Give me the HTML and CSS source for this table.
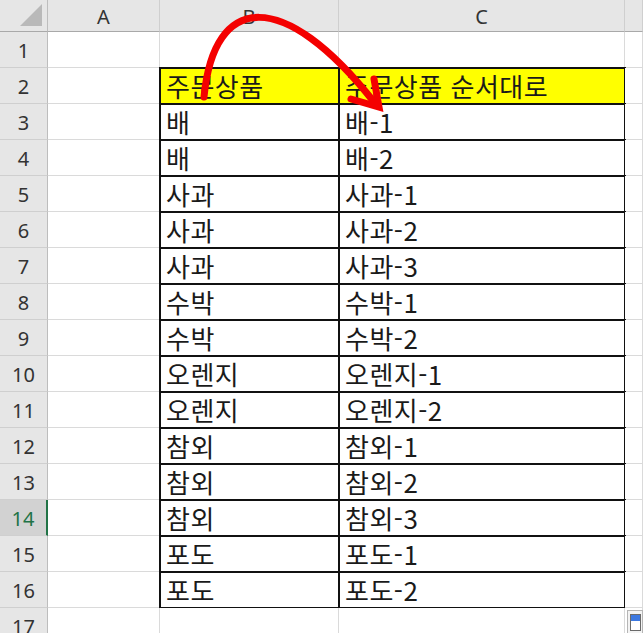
FILE: index.html
```html
<!DOCTYPE html>
<html lang="ko">
<head>
<meta charset="utf-8">
<link rel="stylesheet" href="styles.css">
</head>
<body>
<div class="sheet">
  <div class="row head">
    <div class="corner"><svg class="tri" width="22" height="22" viewBox="0 0 22 22"><polygon points="22,0 22,22 0,22" fill="#b9b9b9"/></svg></div>
    <div class="col">A</div>
    <div class="col">B</div>
    <div class="col">C</div>
    <div class="col"></div>
  </div>
  <div class="row"><div class="rh">1</div><div class="c"></div><div class="c"></div><div class="c"></div><div class="c"></div></div>
  <div class="row"><div class="rh">2</div><div class="c"></div><div class="c t y">주문상품</div><div class="c t y">주문상품 순서대로</div><div class="c"></div></div>
  <div class="row"><div class="rh">3</div><div class="c"></div><div class="c t">배</div><div class="c t">배-1</div><div class="c"></div></div>
  <div class="row"><div class="rh">4</div><div class="c"></div><div class="c t">배</div><div class="c t">배-2</div><div class="c"></div></div>
  <div class="row"><div class="rh">5</div><div class="c"></div><div class="c t">사과</div><div class="c t">사과-1</div><div class="c"></div></div>
  <div class="row"><div class="rh">6</div><div class="c"></div><div class="c t">사과</div><div class="c t">사과-2</div><div class="c"></div></div>
  <div class="row"><div class="rh">7</div><div class="c"></div><div class="c t">사과</div><div class="c t">사과-3</div><div class="c"></div></div>
  <div class="row"><div class="rh">8</div><div class="c"></div><div class="c t">수박</div><div class="c t">수박-1</div><div class="c"></div></div>
  <div class="row"><div class="rh">9</div><div class="c"></div><div class="c t">수박</div><div class="c t">수박-2</div><div class="c"></div></div>
  <div class="row"><div class="rh">10</div><div class="c"></div><div class="c t">오렌지</div><div class="c t">오렌지-1</div><div class="c"></div></div>
  <div class="row"><div class="rh">11</div><div class="c"></div><div class="c t">오렌지</div><div class="c t">오렌지-2</div><div class="c"></div></div>
  <div class="row"><div class="rh">12</div><div class="c"></div><div class="c t">참외</div><div class="c t">참외-1</div><div class="c"></div></div>
  <div class="row"><div class="rh">13</div><div class="c"></div><div class="c t">참외</div><div class="c t">참외-2</div><div class="c"></div></div>
  <div class="row"><div class="rh sel">14</div><div class="c"></div><div class="c t">참외</div><div class="c t">참외-3</div><div class="c"></div></div>
  <div class="row"><div class="rh">15</div><div class="c"></div><div class="c t">포도</div><div class="c t">포도-1</div><div class="c"></div></div>
  <div class="row"><div class="rh">16</div><div class="c"></div><div class="c t">포도</div><div class="c t">포도-2</div><div class="c"></div></div>
  <div class="row"><div class="rh">17</div><div class="c"></div><div class="c"></div><div class="c"></div><div class="c"></div></div>

  <svg class="arrow" width="643" height="633" viewBox="0 0 643 633">
    <path d="M204,97 C214,-8 284,-12 374,102" fill="none" stroke="#f40000" stroke-width="7" stroke-linecap="round"/>
    <path d="M351,99 L379,107 L374,79" fill="none" stroke="#f40000" stroke-width="7" stroke-linecap="round" stroke-linejoin="miter"/>
  </svg>
  <svg class="qa" width="16" height="24" viewBox="0 0 16 24">
    <rect x="0.5" y="0.5" width="15" height="23" fill="#f3f3f3" stroke="#b5b5b5"/>
    <rect x="3.5" y="4.5" width="10" height="16" fill="#fff" stroke="#6a6a6a"/>
    <rect x="4" y="5" width="9" height="6" fill="#3c78e0"/>
  </svg>
</div>
</body>
</html>
```

FILE: styles.css
```css
html, body {
  margin: 0;
  padding: 0;
  background: #fff;
  overflow: hidden;
}

.sheet {
  position: relative;
  width: 643px;
  height: 633px;
  overflow: hidden;
}

.row {
  display: grid;
  grid-template-columns: 48px 112px 179px 286px 1fr;
  height: 36px;
}

.row.head {
  height: 32px;
}

.row > div {
  box-sizing: border-box;
  border-right: 1px solid #dadada;
  border-bottom: 1px solid #dadada;
}

.corner {
  background: #e6e6e6;
  position: relative;
  display: flex;
  align-items: flex-end;
  justify-content: flex-end;
  padding: 0 5px 5px 0;
  border-right: 1px solid #bdbdbd !important;
  border-bottom: 1px solid #a9a9a9 !important;
}

.col {
  background: #e6e6e6;
  border-bottom: 1px solid #a9a9a9 !important;
  border-right: 1px solid #cfcfcf !important;
  font-family: "Noto Sans", "Open Sans", sans-serif;
  font-size: 20px;
  color: #333;
  display: flex;
  align-items: center;
  justify-content: center;
  padding-top: 1px;
}

.rh {
  background: #e6e6e6;
  border-right: 1px solid #bdbdbd !important;
  border-bottom: 1px solid #cfcfcf !important;
  font-family: "Noto Sans", "Open Sans", sans-serif;
  font-size: 20px;
  color: #333;
  display: flex;
  align-items: center;
  justify-content: center;
  padding-top: 1px;
}

.rh.sel {
  background: #d2d2d2;
  color: #217346;
  border-right: 2px solid #217346 !important;
}

.c {
  background: #fff;
}

.t {
  font-family: "Noto Sans CJK KR", "Noto Sans", sans-serif;
  font-size: 26px;
  letter-spacing: 0.5px;
  line-height: 1;
  color: #1a1a1a;
  display: flex;
  align-items: center;
  padding-left: 6px;
  padding-top: 1px;
  white-space: nowrap;
  outline: 2px solid #111;
  outline-offset: -1px;
}

.t.y {
  background: #ffff00;
}

.arrow {
  position: absolute;
  left: 0;
  top: 0;
  pointer-events: none;
}

.qa {
  position: absolute;
  left: 627px;
  top: 610px;
}
```
